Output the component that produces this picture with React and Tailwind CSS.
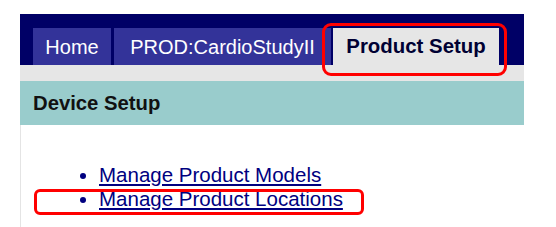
export default function App() {
  return (
    <div className="relative w-[556px] h-[227px] bg-white overflow-hidden font-['Liberation_Sans',Arial,sans-serif]">
      <div className="ml-[20px] w-[504px] pt-[14px]">
        <div className="bg-[#000066] h-[51px] pl-[13px] flex items-end gap-[3px]">
          <div className="w-[78px] h-[37px] bg-[#333399] text-white text-[20px] flex items-center justify-center">Home</div>
          <div className="w-[217px] h-[37px] bg-[#333399] text-white text-[20px] flex items-center justify-center">PROD:CardioStudyII</div>
          <div className="ml-[-1px] w-[166px] h-[37px] bg-[#e6e6e6] text-[#000033] font-bold text-[20.4px] flex items-center justify-center">Product Setup</div>
        </div>
        <div className="h-[16px] bg-[#e6e6e6]"></div>
        <div className="h-[44px] bg-[#99cccc] flex items-center pl-[13px] text-[20.3px] font-bold text-[#111111]">Device Setup</div>
        <div className="border-l border-[#e4e4e4] h-[110px] pt-[38px]">
          <ul className="list-disc pl-[78px] text-[20.5px] leading-[24px] text-[#000080]">
            <li><a className="underline text-[#000080]">Manage Product Models</a></li>
            <li><a className="underline text-[#000080]">Manage Product Locations</a></li>
          </ul>
        </div>
      </div>
      <div className="absolute left-[322px] top-[23px] w-[185px] h-[53px] border-[3px] border-[#ff0000] rounded-[9px]"></div>
      <div className="absolute left-[34px] top-[189px] w-[330px] h-[26px] border-[3px] border-[#ff0000] rounded-[6px]"></div>
    </div>
  );
}
